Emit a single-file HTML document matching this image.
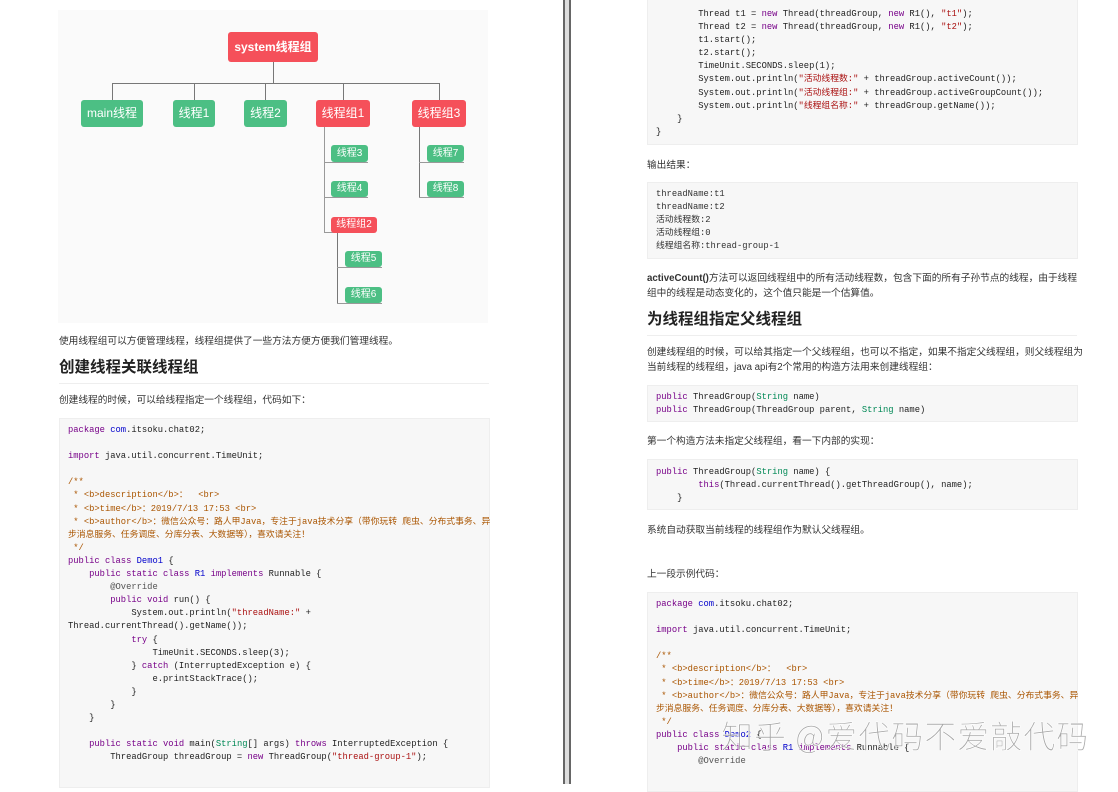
<!DOCTYPE html>
<html><head><meta charset="utf-8">
<style>
*{margin:0;padding:0;box-sizing:border-box}
body{width:1118px;height:784px;background:#fff;position:relative;overflow:hidden;font-family:"Liberation Sans","Noto Sans CJK SC",sans-serif;color:#333}
.sep{position:absolute;left:563px;top:0;width:8px;height:784px;background:#ddd;border-left:2px solid #666;border-right:2px solid #666}
.t{position:absolute;font-size:9.7px;white-space:nowrap;line-height:14px}
.h{position:absolute;font-size:15.5px;font-weight:bold;color:#222;white-space:nowrap;line-height:22px;border-bottom:1px solid #eee;width:430px;padding-bottom:4px}
.cb{position:absolute;background:#f7f7f7;border:1px solid #eee}
.c{position:absolute;font-family:"Liberation Mono","Noto Sans CJK SC",monospace;font-size:8.8px;white-space:pre;line-height:13.1px;color:#222}
.k{color:#770088}.b{color:#0000cc}.s{color:#aa1111}.m{color:#aa5500}.g{color:#008855}.a{color:#555}
.bx{position:absolute;color:#fff;font-size:11px;text-align:center;border-radius:3px;white-space:nowrap}
.gr{background:#4cbf84}.rd{background:#f5505a}
.ln{position:absolute;background:#777}
.wm{position:absolute;left:721px;top:712px;font-size:32px;color:rgba(140,140,140,0.75);-webkit-text-stroke:0.6px #fff;white-space:nowrap;letter-spacing:1px;font-family:"Noto Sans CJK SC",sans-serif;font-weight:300}
</style></head><body>
<div class="sep"></div>

<!-- diagram -->
<div style="position:absolute;left:58px;top:10px;width:430px;height:313px;background:#fafafa"></div>
<div class="bx rd" style="left:228px;top:32px;width:90px;height:30px;line-height:30px;font-weight:bold;font-size:12px">system线程组</div>
<div class="ln" style="left:273px;top:62px;width:1px;height:21px"></div>
<div class="ln" style="left:112px;top:83px;width:328px;height:1px"></div>
<div class="ln" style="left:112px;top:83px;width:1px;height:17px"></div>
<div class="ln" style="left:194px;top:83px;width:1px;height:17px"></div>
<div class="ln" style="left:265px;top:83px;width:1px;height:17px"></div>
<div class="ln" style="left:343px;top:83px;width:1px;height:17px"></div>
<div class="ln" style="left:439px;top:83px;width:1px;height:17px"></div>
<div class="bx gr" style="left:81px;top:100px;width:62px;height:27px;line-height:27px;font-size:12px">main线程</div>
<div class="bx gr" style="left:173px;top:100px;width:42px;height:27px;line-height:27px;font-size:12px">线程1</div>
<div class="bx gr" style="left:244px;top:100px;width:43px;height:27px;line-height:27px;font-size:12px">线程2</div>
<div class="bx rd" style="left:316px;top:100px;width:54px;height:27px;line-height:27px;font-size:12px">线程组1</div>
<div class="bx rd" style="left:412px;top:100px;width:54px;height:27px;line-height:27px;font-size:12px">线程组3</div>
<div class="ln" style="left:324px;top:127px;width:1px;height:106px;background:#999"></div>
<div class="ln" style="left:324px;top:162px;width:44px;height:1px;background:#999"></div>
<div class="ln" style="left:324px;top:197px;width:44px;height:1px;background:#999"></div>
<div class="ln" style="left:324px;top:232px;width:10px;height:1px;background:#999"></div>
<div class="bx gr" style="left:331px;top:145px;width:37px;height:17px;line-height:17px;font-size:10px">线程3</div>
<div class="bx gr" style="left:331px;top:181px;width:37px;height:16px;line-height:16px;font-size:10px">线程4</div>
<div class="bx rd" style="left:331px;top:217px;width:46px;height:16px;line-height:16px;font-size:10px">线程组2</div>
<div class="ln" style="left:337px;top:233px;width:1px;height:70px"></div>
<div class="ln" style="left:337px;top:267px;width:45px;height:1px;background:#999"></div>
<div class="ln" style="left:337px;top:303px;width:45px;height:1px;background:#999"></div>
<div class="bx gr" style="left:345px;top:251px;width:37px;height:16px;line-height:16px;font-size:10px">线程5</div>
<div class="bx gr" style="left:345px;top:287px;width:37px;height:16px;line-height:16px;font-size:10px">线程6</div>
<div class="ln" style="left:419px;top:127px;width:1px;height:70px"></div>
<div class="ln" style="left:419px;top:162px;width:45px;height:1px;background:#999"></div>
<div class="ln" style="left:419px;top:197px;width:45px;height:1px;background:#999"></div>
<div class="bx gr" style="left:427px;top:145px;width:37px;height:17px;line-height:17px;font-size:10px">线程7</div>
<div class="bx gr" style="left:427px;top:181px;width:37px;height:16px;line-height:16px;font-size:10px">线程8</div>

<!-- left text -->
<div class="t" style="left:59px;top:335px">使用线程组可以方便管理线程，线程组提供了一些方法方便方便我们管理线程。</div>
<div class="h" style="left:59px;top:357px">创建线程关联线程组</div>
<div class="t" style="left:59px;top:394px">创建线程的时候，可以给线程指定一个线程组，代码如下：</div>
<div class="cb" style="left:59px;top:418px;width:431px;height:370px"></div>
<div class="c" style="left:68px;top:424px"><span class="k">package</span> <span class="b">com</span>.itsoku.chat02;

<span class="k">import</span> java.util.concurrent.TimeUnit;

<span class="m">/**
 * &lt;b&gt;description&lt;/b&gt;：  &lt;br&gt;
 * &lt;b&gt;time&lt;/b&gt;：2019/7/13 17:53 &lt;br&gt;
 * &lt;b&gt;author&lt;/b&gt;：微信公众号：路人甲Java，专注于java技术分享（带你玩转 爬虫、分布式事务、异
步消息服务、任务调度、分库分表、大数据等），喜欢请关注！
 */</span>
<span class="k">public class</span> <span class="b">Demo1</span> {
    <span class="k">public static class</span> <span class="b">R1</span> <span class="k">implements</span> Runnable {
        <span class="a">@Override</span>
        <span class="k">public void</span> run() {
            System.out.println(<span class="s">"threadName:"</span> +
Thread.currentThread().getName());
            <span class="k">try</span> {
                TimeUnit.SECONDS.sleep(3);
            } <span class="k">catch</span> (InterruptedException e) {
                e.printStackTrace();
            }
        }
    }

    <span class="k">public static void</span> main(<span class="g">String</span>[] args) <span class="k">throws</span> InterruptedException {
        ThreadGroup threadGroup = <span class="k">new</span> ThreadGroup(<span class="s">"thread-group-1"</span>);</div>

<!-- right page -->
<div class="cb" style="left:647px;top:-5px;width:431px;height:150px"></div>
<div class="c" style="left:656px;top:8px">        Thread t1 = <span class="k">new</span> Thread(threadGroup, <span class="k">new</span> R1(), <span class="s">"t1"</span>);
        Thread t2 = <span class="k">new</span> Thread(threadGroup, <span class="k">new</span> R1(), <span class="s">"t2"</span>);
        t1.start();
        t2.start();
        TimeUnit.SECONDS.sleep(1);
        System.out.println(<span class="s">"活动线程数:"</span> + threadGroup.activeCount());
        System.out.println(<span class="s">"活动线程组:"</span> + threadGroup.activeGroupCount());
        System.out.println(<span class="s">"线程组名称:"</span> + threadGroup.getName());
    }
}</div>
<div class="t" style="left:647px;top:159px">输出结果：</div>
<div class="cb" style="left:647px;top:182px;width:431px;height:77px"></div>
<div class="c" style="left:656px;top:188px;color:#333">threadName:t1
threadName:t2
活动线程数:2
活动线程组:0
线程组名称:thread-group-1</div>
<div class="t" style="left:647px;top:272px;line-height:14.5px"><b>activeCount()</b>方法可以返回线程组中的所有活动线程数，包含下面的所有子孙节点的线程，由于线程<br>组中的线程是动态变化的，这个值只能是一个估算值。</div>
<div class="h" style="left:647px;top:309px">为线程组指定父线程组</div>
<div class="t" style="left:647px;top:346px;line-height:14.5px">创建线程组的时候，可以给其指定一个父线程组，也可以不指定，如果不指定父线程组，则父线程组为<br>当前线程的线程组，java api有2个常用的构造方法用来创建线程组：</div>
<div class="cb" style="left:647px;top:385px;width:431px;height:37px"></div>
<div class="c" style="left:656px;top:391px"><span class="k">public</span> ThreadGroup(<span class="g">String</span> name)
<span class="k">public</span> ThreadGroup(ThreadGroup parent, <span class="g">String</span> name)</div>
<div class="t" style="left:647px;top:435px">第一个构造方法未指定父线程组，看一下内部的实现：</div>
<div class="cb" style="left:647px;top:459px;width:431px;height:51px"></div>
<div class="c" style="left:656px;top:466px"><span class="k">public</span> ThreadGroup(<span class="g">String</span> name) {
        <span class="k">this</span>(Thread.currentThread().getThreadGroup(), name);
    }</div>
<div class="t" style="left:647px;top:524px">系统自动获取当前线程的线程组作为默认父线程组。</div>
<div class="t" style="left:647px;top:568px">上一段示例代码：</div>
<div class="cb" style="left:647px;top:592px;width:431px;height:200px"></div>
<div class="c" style="left:656px;top:598px"><span class="k">package</span> <span class="b">com</span>.itsoku.chat02;

<span class="k">import</span> java.util.concurrent.TimeUnit;

<span class="m">/**
 * &lt;b&gt;description&lt;/b&gt;：  &lt;br&gt;
 * &lt;b&gt;time&lt;/b&gt;：2019/7/13 17:53 &lt;br&gt;
 * &lt;b&gt;author&lt;/b&gt;：微信公众号：路人甲Java，专注于java技术分享（带你玩转 爬虫、分布式事务、异
步消息服务、任务调度、分库分表、大数据等），喜欢请关注！
 */</span>
<span class="k">public class</span> <span class="b">Demo2</span> {
    <span class="k">public static class</span> <span class="b">R1</span> <span class="k">implements</span> Runnable {
        <span class="a">@Override</span></div>
<div class="wm">知乎 @爱代码不爱敲代码</div>
</body></html>
